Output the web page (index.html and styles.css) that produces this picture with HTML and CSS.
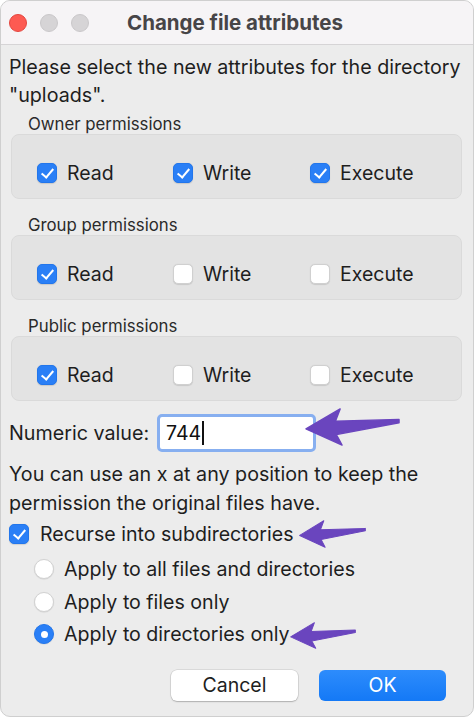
FILE: index.html
```html
<!DOCTYPE html>
<html>
<head>
<meta charset="utf-8">
<link rel="stylesheet" href="styles.css">
</head>
<body>
<div class="window">
  <div class="titlebar">
    <div class="lights">
      <span class="light red"></span>
      <span class="light gray"></span>
      <span class="light gray"></span>
    </div>
    <div class="title">Change file attributes</div>
    <div></div>
  </div>
  <div class="content">
    <p class="intro">Please select the new attributes for the directory "uploads".</p>

    <div class="group-label first">Owner permissions</div>
    <div class="box">
      <div class="opt"><span class="cb on"></span><span>Read</span></div>
      <div class="opt"><span class="cb on"></span><span>Write</span></div>
      <div class="opt"><span class="cb on"></span><span>Execute</span></div>
    </div>

    <div class="group-label">Group permissions</div>
    <div class="box">
      <div class="opt"><span class="cb on"></span><span>Read</span></div>
      <div class="opt"><span class="cb"></span><span>Write</span></div>
      <div class="opt"><span class="cb"></span><span>Execute</span></div>
    </div>

    <div class="group-label">Public permissions</div>
    <div class="box">
      <div class="opt"><span class="cb on"></span><span>Read</span></div>
      <div class="opt"><span class="cb"></span><span>Write</span></div>
      <div class="opt"><span class="cb"></span><span>Execute</span></div>
    </div>

    <div class="numeric">
      <span class="num-label">Numeric value:</span>
      <div class="input"><span>744</span><span class="caret"></span></div>
    </div>

    <p class="help">You can use an x at any position to keep the permission the original files have.</p>

    <div class="recurse"><span class="cb on"></span><span>Recurse into subdirectories</span></div>

    <div class="radios">
      <div class="radio-row"><span class="rb"></span><span>Apply to all files and directories</span></div>
      <div class="radio-row"><span class="rb"></span><span>Apply to files only</span></div>
      <div class="radio-row"><span class="rb on"></span><span>Apply to directories only</span></div>
    </div>

    <div class="buttons">
      <div class="btn cancel">Cancel</div>
      <div class="btn ok">OK</div>
    </div>
  </div>

  <svg class="arrow a1" viewBox="0 0 100 40" preserveAspectRatio="none"><path d="M1,22 L37,1 L32,14 L99,12 L99,15.5 L33,28 L39,39 Z"/></svg>
  <svg class="arrow a2" viewBox="0 0 100 40" preserveAspectRatio="none"><path d="M1,22 L37,1 L32,14 L99,12 L99,15.5 L33,28 L39,39 Z"/></svg>
  <svg class="arrow a3" viewBox="0 0 100 40" preserveAspectRatio="none"><path d="M1,22 L37,1 L32,14 L99,12 L99,15.5 L33,28 L39,39 Z"/></svg>
</div>
</body>
</html>
```

FILE: styles.css
```css
* { box-sizing: border-box; }
html, body { margin: 0; padding: 0; }
body {
  background: #ffffff;
  font-family: Inter, "Noto Sans", "Liberation Sans", sans-serif;
  color: #1e1e1e;
}
.window {
  position: relative;
  width: 474px;
  height: 717px;
  background: #ececec;
  border: 1px solid #cfcfcf;
  border-radius: 10px;
  overflow: hidden;
}
.titlebar {
  height: 44px;
  background: #f6f4f6;
  border-bottom: 1px solid #d6d4d6;
  display: grid;
  grid-template-columns: 1fr auto 1fr;
  align-items: center;
}
.lights {
  display: flex;
  gap: 13px;
  padding-left: 8px;
}
.light {
  width: 18px;
  height: 18px;
  border-radius: 50%;
  display: block;
}
.light.red { background: #fd5a52; border: 1px solid #e4463f; }
.light.gray { background: #d6d4d6; border: 1px solid #cac8ca; }
.title {
  font-size: 20.5px;
  font-weight: 700;
  color: #474547;
  padding-right: 4px;
}
.content {
  padding: 0 0 0 8px;
}
.intro, .help {
  margin: 8px 0 0 0;
  font-size: 19.7px;
  line-height: 28px;
}
.help { margin-top: 8px; line-height: 29px; }
.group-label {
  margin-top: 16px;
  padding-left: 19px;
  font-size: 16.8px;
  line-height: 20px;
  color: #2a2a2a;
}
.group-label.first { margin-top: 5px; }
.box {
  margin-left: 2px;
  width: 451px;
  height: 65px;
  background: #e3e3e3;
  border: 1px solid #dadada;
  border-radius: 8px;
  padding: 27px 0 0 25px;
  display: grid;
  grid-template-columns: 136px 137px auto;
  align-items: start;
}
.opt, .recurse, .radio-row {
  display: flex;
  align-items: center;
  gap: 10px;
  font-size: 19.5px;
  height: 22px;
}
.cb {
  width: 20px;
  height: 20px;
  border-radius: 5px;
  background: #ffffff;
  border: 1px solid #d0d0d0;
  box-shadow: 0 0.5px 1px rgba(0,0,0,0.12);
  flex: none;
  position: relative;
}
.cb.on {
  background: #2a7ff6;
  border-color: #2276ec;
}
.cb.on::after {
  content: "";
  position: absolute;
  left: 6px;
  top: 2px;
  width: 5px;
  height: 10px;
  border-right: 2.6px solid #fff;
  border-bottom: 2.6px solid #fff;
  transform: rotate(40deg);
}
.numeric {
  margin-top: 13px;
  height: 38px;
  display: flex;
  align-items: center;
  font-size: 19.7px;
}
.num-label { width: 148px; }
.input {
  width: 159px;
  height: 38px;
  border: 3.5px solid #87aff0;
  border-radius: 5px;
  background: #fff;
  display: flex;
  align-items: center;
  padding-left: 6px;
  font-size: 19.5px;
  color: #111;
}
.caret {
  width: 1.5px;
  height: 24px;
  background: #111;
  margin-left: 1px;
}
.recurse {
  margin-top: 0;
  height: 32px;
  gap: 11px;
  font-size: 19.6px;
}
.radios {
  margin-top: 3px;
  padding-left: 25px;
}
.radio-row {
  height: 32.5px;
  font-size: 19.6px;
}
.rb {
  width: 20px;
  height: 20px;
  border-radius: 50%;
  background: #fff;
  border: 1px solid #d2d2d2;
  box-shadow: 0 0.5px 1px rgba(0,0,0,0.12);
  flex: none;
  position: relative;
}
.rb.on {
  background: #2a7ff6;
  border-color: #2276ec;
}
.rb.on::after {
  content: "";
  position: absolute;
  left: 5.5px;
  top: 5.5px;
  width: 7px;
  height: 7px;
  border-radius: 50%;
  background: #fff;
}
.buttons {
  margin-top: 19px;
  display: flex;
  justify-content: flex-end;
  gap: 21px;
  padding-right: 27px;
}
.btn {
  width: 127px;
  height: 31px;
  border-radius: 6px;
  display: flex;
  align-items: center;
  justify-content: center;
  font-size: 19.5px;
}
.btn.cancel {
  background: #ffffff;
  color: #1e1e1e;
  box-shadow: 0 0 0 0.5px rgba(0,0,0,0.15), 0 1px 1.5px rgba(0,0,0,0.2);
}
.btn.ok {
  background: linear-gradient(#2d8cfc, #1479f6);
  color: #ffffff;
}
.arrow {
  position: absolute;
  fill: #6a45be;
  stroke: #6a45be;
  stroke-width: 1.5;
  stroke-linejoin: round;
  overflow: visible;
}
.a1 { left: 304px; top: 407px; width: 95px; height: 38px; }
.a2 { left: 298px; top: 519px; width: 67px; height: 28px; }
.a3 { left: 289px; top: 621px; width: 66px; height: 27px; }
```
